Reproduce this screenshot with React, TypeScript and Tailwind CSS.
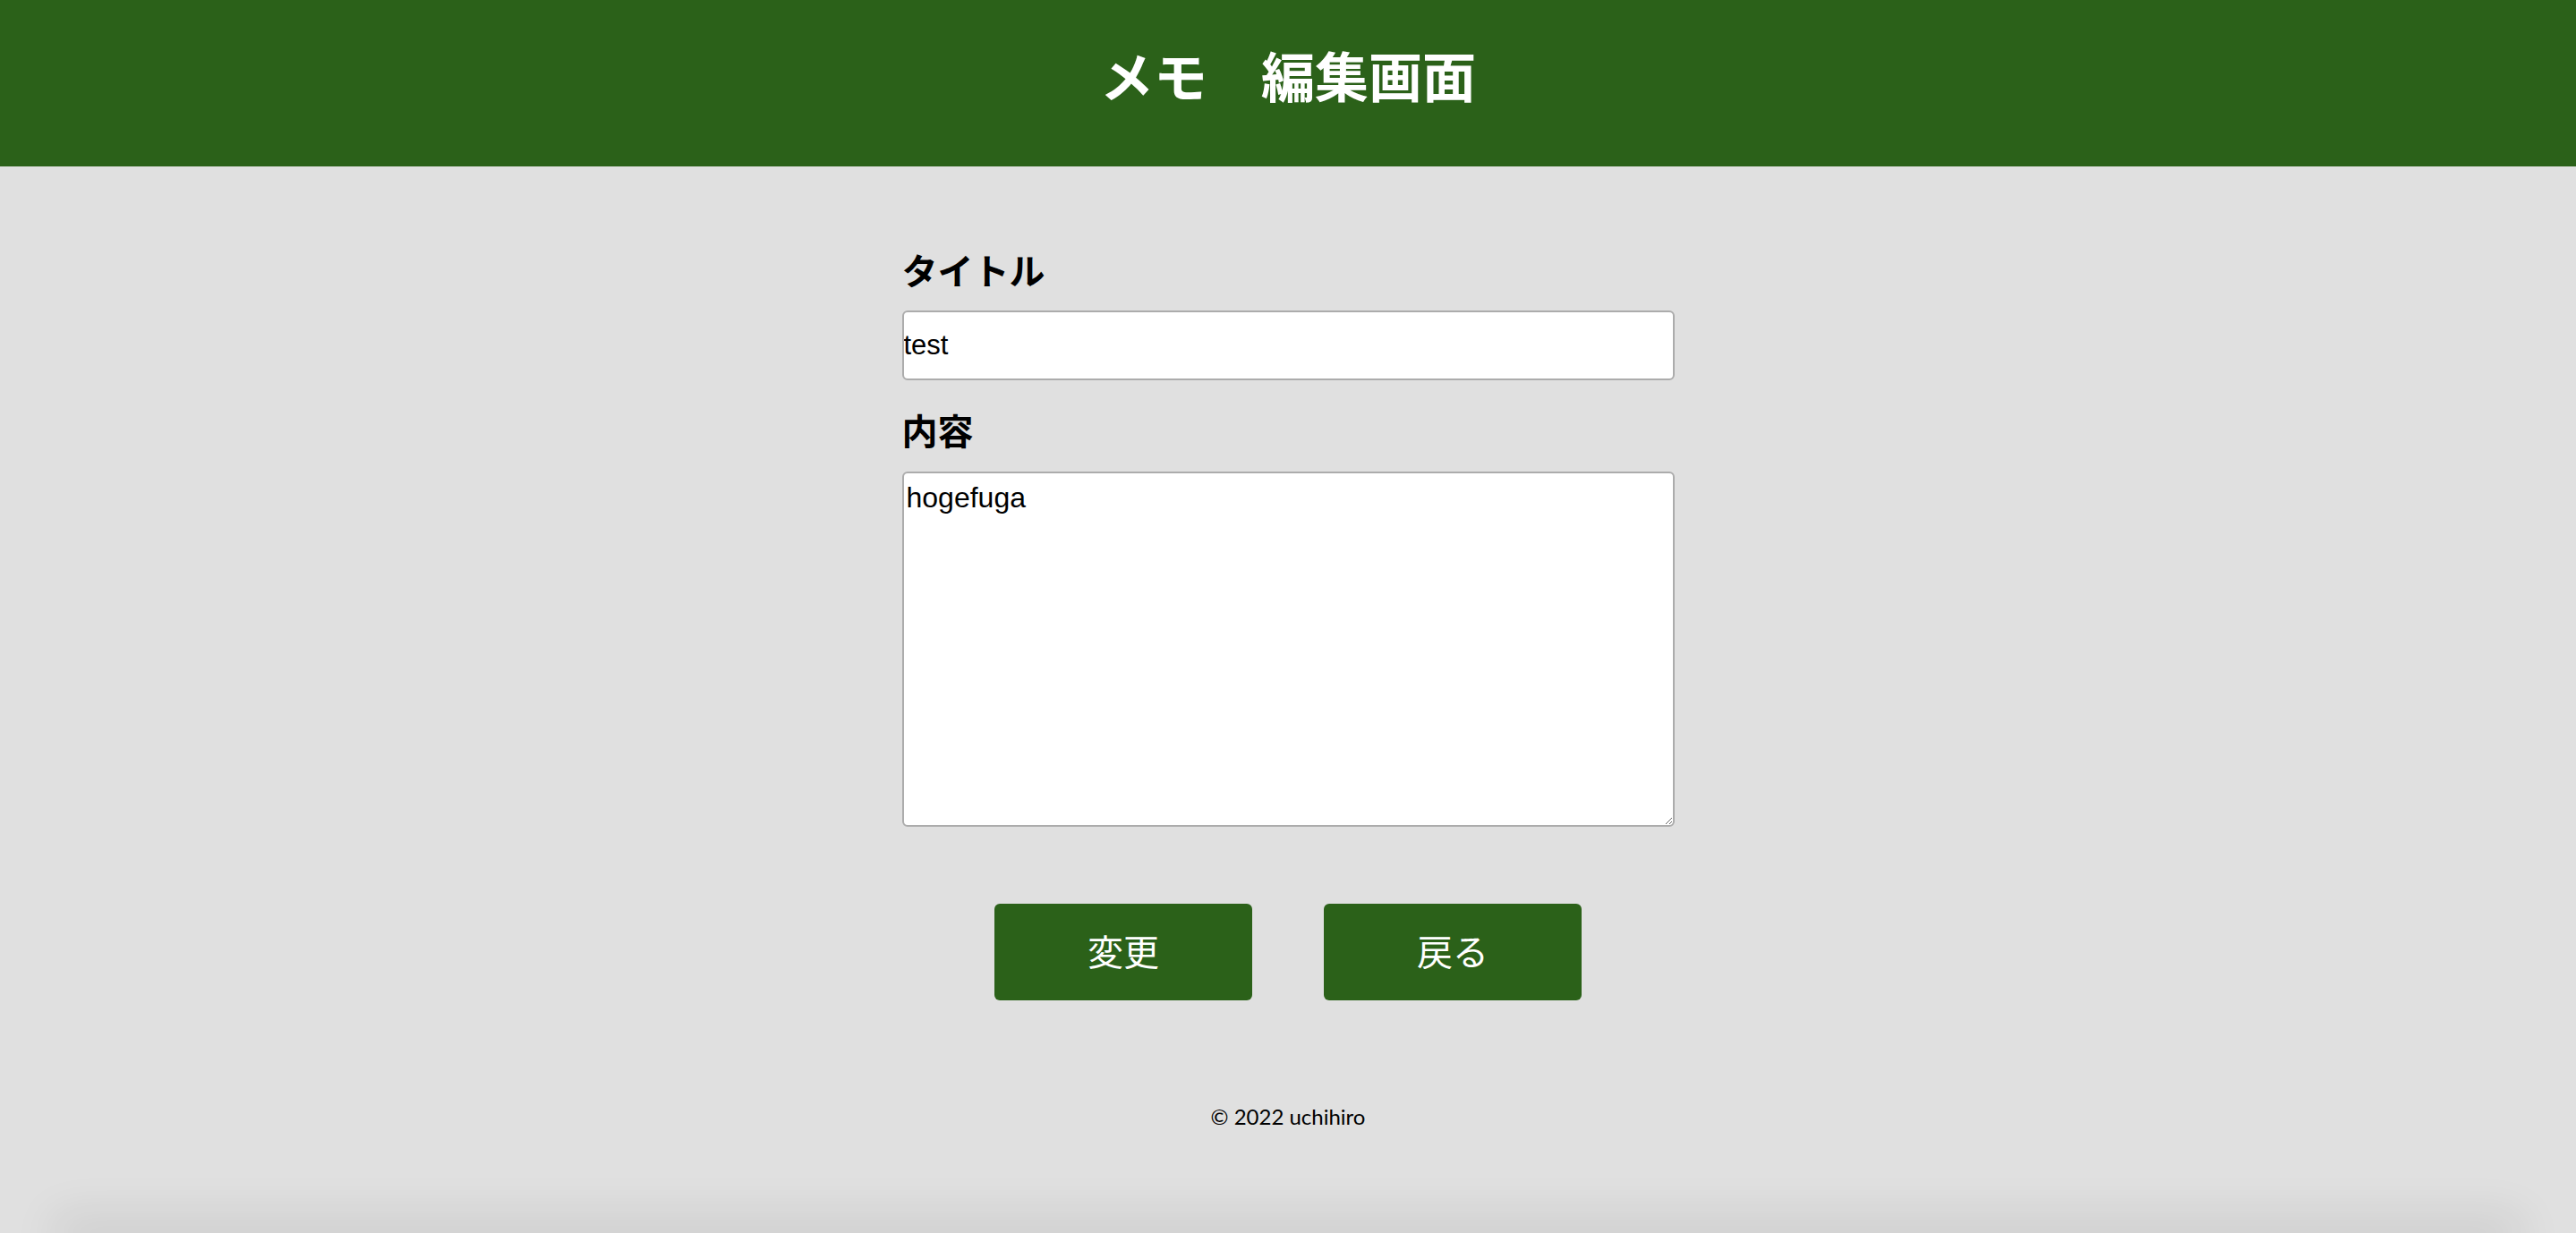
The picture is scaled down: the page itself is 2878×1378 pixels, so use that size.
import React from 'react'

function MemoEdit() {
  return (
    <div className="min-h-screen flex flex-col bg-[#e0e0e0] font-['Noto_Sans_CJK_JP',sans-serif] text-black">
      <header className="h-[186px] bg-[#2b6119] flex items-center justify-center pb-[20px]">
        <h1 className="text-[60px] font-bold text-white leading-none">メモ　編集画面</h1>
      </header>
      <main className="w-[863px] mx-auto pt-[92px] flex flex-col">
        <label className="text-[40px] font-bold leading-[46px] mb-[23px]">タイトル</label>
        <input
          type="text"
          defaultValue="test"
          className="h-[78px] bg-white border-2 border-[#acacac] rounded-[6px] pl-[0px] text-[31px] font-['Liberation_Sans',Arial,sans-serif] outline-none"
        />
        <label className="text-[40px] font-bold leading-[46px] mt-[32px] mb-[24px]">内容</label>
        <textarea
          defaultValue="hogefuga"
          className="h-[397px] bg-white border-2 border-[#acacac] rounded-[6px] pl-[3px] pt-[3px] text-[32px] font-['Liberation_Sans',Arial,sans-serif] outline-none"
        />
        <div className="flex justify-center gap-[80px] mt-[86px]">
          <button type="button" className="w-[288px] h-[108px] rounded-[6px] bg-[#2b6119] text-white text-[40px] pb-[4px]">
            変更
          </button>
          <button type="button" className="w-[288px] h-[108px] rounded-[6px] bg-[#2b6119] text-white text-[40px] pb-[4px]">
            戻る
          </button>
        </div>
      </main>
      <footer className="mt-[115px] text-center text-[24px] leading-[30px] font-['Lato',sans-serif]">
        © 2022 uchihiro
      </footer>
      <div className="mt-auto h-0 mx-[80px] shadow-[0_0_50px_20px_rgba(0,0,0,0.09)]" />
    </div>
  )
}

export default MemoEdit;
